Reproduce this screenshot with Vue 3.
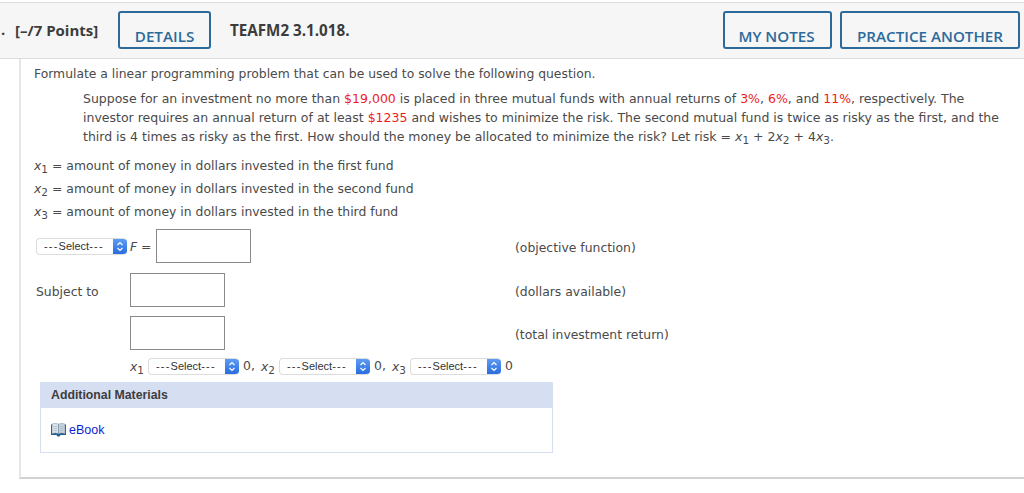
<template>
  <div class="page">
    <header class="head">
      <span class="dot">.</span>
      <span class="points">[–/7 Points]</span>
      <button class="btn details">DETAILS</button>
      <span class="code">TEAFM2 3.1.018.</span>
      <span class="spacer"></span>
      <button class="btn notes">MY NOTES</button>
      <button class="btn practice">PRACTICE ANOTHER</button>
    </header>
    <main class="body">
      <p class="intro">Formulate a linear programming problem that can be used to solve the following question.</p>
      <p class="question">Suppose for an investment no more than <b class="red">$19,000</b> is placed in three mutual funds with annual returns of <b class="red">3%</b>, <b class="red">6%</b>, and <b class="red">11%</b>, respectively. The investor requires an annual return of at least <b class="red">$1235</b> and wishes to minimize the risk. The second mutual fund is twice as risky as the first, and the third is 4 times as risky as the first. How should the money be allocated to minimize the risk? Let risk = <i>x</i><sub>1</sub> + 2<i>x</i><sub>2</sub> + 4<i>x</i><sub>3</sub>.</p>
      <div class="defs">
        <div v-for="d in defs" :key="d.n" class="def"><i>x</i><sub>{{ d.n }}</sub> = amount of money in dollars invested in the {{ d.w }} fund</div>
      </div>
      <div class="row first">
        <div class="left">
          <span class="select"><span class="label"><span class="dash">---</span>Select<span class="dash">---</span></span><span class="arrow"><svg width="8" height="11" viewBox="0 0 8 11"><path d="M1.500 4 4 1.500 6.500 4M1.500 7 4 9.500 6.500 7" fill="none" stroke="#fff" stroke-width="1.200"/></svg></span></span>
          <span class="fx"><i>F</i> =</span>
          <span class="box"></span>
        </div>
        <span class="note">(objective function)</span>
      </div>
      <div class="row second">
        <div class="left"><span class="subject">Subject to</span><span class="box"></span></div>
        <span class="note">(dollars available)</span>
      </div>
      <div class="row third">
        <div class="left"><span class="box boxed"></span></div>
        <span class="note">(total investment return)</span>
      </div>
      <div class="bounds">
        <template v-for="(v, i) in [1, 2, 3]" :key="v">
          <span class="var"><i>x</i><sub>{{ v }}</sub></span>
          <span class="select"><span class="label"><span class="dash">---</span>Select<span class="dash">---</span></span><span class="arrow"><svg width="8" height="11" viewBox="0 0 8 11"><path d="M1.500 4 4 1.500 6.500 4M1.500 7 4 9.500 6.500 7" fill="none" stroke="#fff" stroke-width="1.200"/></svg></span></span>
          <span class="zero">0{{ i < 2 ? ',' : '' }}</span>
        </template>
      </div>
      <section class="materials">
        <h3>Additional Materials</h3>
        <div class="mat-body">
          <svg class="book" width="15" height="14" viewBox="0 0 15 14">
            <path d="M0 1.500h15V12H9.500l-1 1.500h-2l-1-1.500H0z" fill="#1f5f8f"/>
            <path d="M1 1.200c2-1 4.500-1 6.500 0v9.600c-2-1-4.500-1-6.500 0z" fill="#dbe4ea" stroke="#6f8ba0" stroke-width=".5"/>
            <path d="M7.500 1.200c2-1 4.500-1 6.500 0v9.600c-2-1-4.500-1-6.500 0z" fill="#c6d3dc" stroke="#6f8ba0" stroke-width=".5"/>
            <path d="M2.500 3.500h3.500M2.500 5.500h3.500M2.500 7.500h3.500M9 3.500h3.500M9 5.500h3.500M9 7.500h3.500" stroke="#a5b5c0" stroke-width=".7"/>
          </svg>
          <a class="ebook">eBook</a>
        </div>
      </section>
    </main>
  </div>
</template>

<script setup>
const defs = [
  { n: 1, w: 'first' },
  { n: 2, w: 'second' },
  { n: 3, w: 'third' }
]
</script>

<style>
html, body { margin: 0; background: #fff; }
</style>

<style scoped>
.page {
  width: 1024px;
  height: 493px;
  overflow: hidden;
  padding-top: 2px;
  box-sizing: border-box;
  font-family: "DejaVu Sans", Verdana, sans-serif;
  font-size: 12.4px;
  color: #4a4a4a;
}
.head {
  height: 55px;
  background: #f6f6f6;
  border-top: 1px solid #dcdcdc;
  border-bottom: 1px solid #dcdcdc;
  display: flex;
  align-items: flex-start;
  font-family: "Open Sans", sans-serif;
  color: #3c3c3c;
  font-weight: 700;
  font-size: 15px;
}
.dot { margin-left: 1px; margin-top: 16px; width: 14px; }
.points { margin-top: 17px; width: 103px; line-height: 20px; }
.code { margin-top: 17px; margin-left: 19px; line-height: 20px; font-size: 15.200px; }
.spacer { flex: 1; }
.btn {
  margin-top: 8px;
  height: 38px;
  box-sizing: border-box;
  background: #f6f6f6;
  border: 2px solid #2b6a9b;
  border-radius: 3px;
  color: #2b6a9b;
  font: 600 15.200px/20px "Open Sans", sans-serif;
  padding: 11px 0 0;
  text-align: center;
}
.details { width: 93px; }
.notes { width: 109px; padding-right: 2px; }
.practice { width: 180px; margin-left: 8px; margin-right: 4px; }
.body {
  margin-left: 19px;
  height: 420px;
  box-sizing: border-box;
  border-left: 2px solid #e6e6e6;
  border-bottom: 2px solid #d2d2d2;
  padding: 6px 0 0 13px;
}
p { margin: 0; }
.intro { line-height: 18px; font-size: 12.370px; }
.question { margin: 6px 22px 0 49px; line-height: 19px; font-size: 12.500px; }
.red { color: #ee1c1c; font-weight: 400; }
sub { font-size: 10.500px; line-height: 0; vertical-align: -3px; }
.defs { margin-top: 8px; }
.def { height: 23px; line-height: 23px; }
.row { display: flex; align-items: center; height: 34px; margin-left: 2px; }
.first { margin-top: 6px; }
.second { margin-top: 10px; }
.third { margin-top: 9px; }
.left { width: 479px; display: flex; align-items: center; flex: none; }
.note { padding-top: 2px; }
.box {
  width: 95px;
  height: 34px;
  box-sizing: border-box;
  background: #fff;
  border: 1px solid #8a8a8a;
  display: block;
}
.boxed { margin-left: 94px; }
.subject { width: 94px; padding-top: 2px; box-sizing: border-box; }
.fx { width: 29px; padding-left: 3px; box-sizing: border-box; white-space: nowrap; }
.select {
  display: inline-flex;
  width: 91px;
  height: 17px;
  box-sizing: border-box;
  background: #fff;
  border: 1px solid #dcdcdc;
  border-right: none;
  border-radius: 4px;
  font: 11px/15px "Liberation Sans", Arial, sans-serif;
  color: #333;
  overflow: hidden;
  flex: none;
}
.label { flex: 1; padding-left: 7px; white-space: nowrap; }
.dash { letter-spacing: 1.200px; }
.arrow {
  width: 14px;
  background: linear-gradient(#5d9bf3, #2a6de0);
  display: flex;
  align-items: center;
  justify-content: center;
  flex: none;
}
.bounds {
  display: flex;
  align-items: center;
  height: 22px;
  margin: 5px 0 0 96px;
  white-space: nowrap;
}
.var { width: 18px; flex: none; }
.zero { margin-left: 4px; width: 18px; flex: none; padding-bottom: 2px; }
.materials {
  margin: 5px 0 0 6px;
  width: 513px;
  height: 71px;
  box-sizing: border-box;
  border: 1px solid #d6def2;
  border-top: none;
  font-family: "Liberation Sans", Arial, sans-serif;
}
h3 {
  margin: 0 -1px;
  height: 26px;
  background: #d6def2;
  font: 700 12.300px/26px "Liberation Sans", Arial, sans-serif;
  color: #3d3d3d;
  padding-left: 11px;
}
.mat-body {
  display: flex;
  align-items: center;
  padding: 14px 0 0 10px;
  height: 16px;
}
.book { margin-right: 3px; flex: none; }
.ebook { color: #0a1fd0; font-size: 12.500px; }
</style>
